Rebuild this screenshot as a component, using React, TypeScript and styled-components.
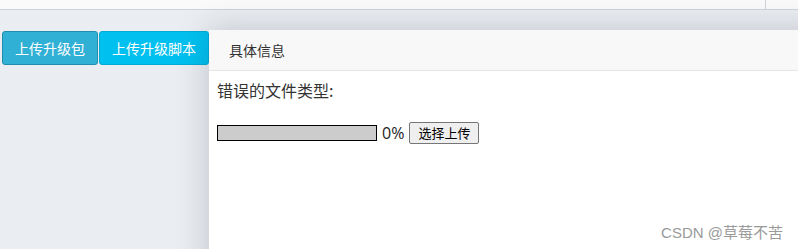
import styled, { createGlobalStyle } from "styled-components";

const GlobalStyle = createGlobalStyle`
  html, body {
    margin: 0;
    padding: 0;
  }
  body {
    background: #eaedf1;
    font-family: "Liberation Sans", "Noto Sans CJK SC", sans-serif;
    color: #333;
  }
`;

const Page = styled.div`
  position: relative;
  width: 798px;
  height: 249px;
  overflow: hidden;
  background: #eaedf1;
`;

const TopBar = styled.div`
  height: 9px;
  background: #fafafa;
  border-bottom: 1px solid #cfd4db;
  display: flex;
  justify-content: flex-end;
`;

const TopDivider = styled.div`
  width: 32px;
  border-left: 1px solid #cfd4db;
`;

const Toolbar = styled.div`
  display: flex;
  gap: 1px;
  padding: 21px 0 0 2px;
`;

const ToolButton = styled.button<{ $active?: boolean }>`
  height: 34px;
  padding: 0 12px;
  font-family: "Noto Sans CJK SC", sans-serif;
  font-size: 14px;
  line-height: 32px;
  color: #fff;
  border-radius: 3px;
  border: 1px solid ${(p) => (p.$active ? "#1f8db0" : "#00acd6")};
  background: ${(p) => (p.$active ? "#31b0d5" : "#00c0ef")};
  cursor: pointer;
`;

const Modal = styled.div`
  position: absolute;
  left: 209px;
  top: 30px;
  width: 620px;
  height: 260px;
  background: #fff;
  box-shadow: 0 0 30px rgba(40, 50, 70, 0.22);
`;

const ModalHeader = styled.div`
  height: 41px;
  box-sizing: border-box;
  padding-left: 20px;
  background: #f8f8f8;
  border-bottom: 1px solid #e5e5e5;
  display: flex;
  align-items: center;
  font-family: "Noto Sans CJK SC", sans-serif;
  font-size: 14px;
  color: #333;
`;

const ModalBody = styled.div`
  padding: 8px 8px;
`;

const Message = styled.div`
  font-family: "Noto Sans CJK SC", sans-serif;
  font-size: 16px;
  line-height: 22px;
  color: #333;
`;

const UploadRow = styled.div`
  display: flex;
  align-items: center;
  margin-top: 21px;
`;

const ProgressTrack = styled.div`
  width: 158px;
  height: 14px;
  border: 1px solid #000;
  background: #cccccc;
`;

const ProgressFill = styled.div`
  height: 100%;
  background: #4caf50;
`;

const Percent = styled.span`
  margin-left: 5px;
  font-family: "Open Sans", "Liberation Sans", sans-serif;
  font-size: 16px;
  color: #222;
`;

const PlainButton = styled.button`
  margin-left: 5px;
  height: 22px;
  padding: 0 8px;
  font-family: "Noto Sans CJK SC", sans-serif;
  font-size: 13px;
  line-height: 20px;
  color: #000;
  background: #efefef;
  border: 1px solid #767676;
  border-radius: 2px;
`;

const Watermark = styled.div`
  position: absolute;
  right: 15px;
  bottom: 7px;
  font-family: "Liberation Sans", "Noto Sans CJK SC", sans-serif;
  font-size: 15px;
  color: #9a9a9a;
`;

export default function App() {
  const progress = 0;
  return (
    <>
      <GlobalStyle />
      <Page>
        <TopBar>
          <TopDivider />
        </TopBar>
        <Toolbar>
          <ToolButton $active>上传升级包</ToolButton>
          <ToolButton>上传升级脚本</ToolButton>
        </Toolbar>
        <Modal>
          <ModalHeader>具体信息</ModalHeader>
          <ModalBody>
            <Message>错误的文件类型:</Message>
            <UploadRow>
              <ProgressTrack>
                <ProgressFill style={{ width: `${progress}%` }} />
              </ProgressTrack>
              <Percent>{progress}%</Percent>
              <PlainButton>选择上传</PlainButton>
            </UploadRow>
          </ModalBody>
        </Modal>
        <Watermark>CSDN @草莓不苦</Watermark>
      </Page>
    </>
  );
}
